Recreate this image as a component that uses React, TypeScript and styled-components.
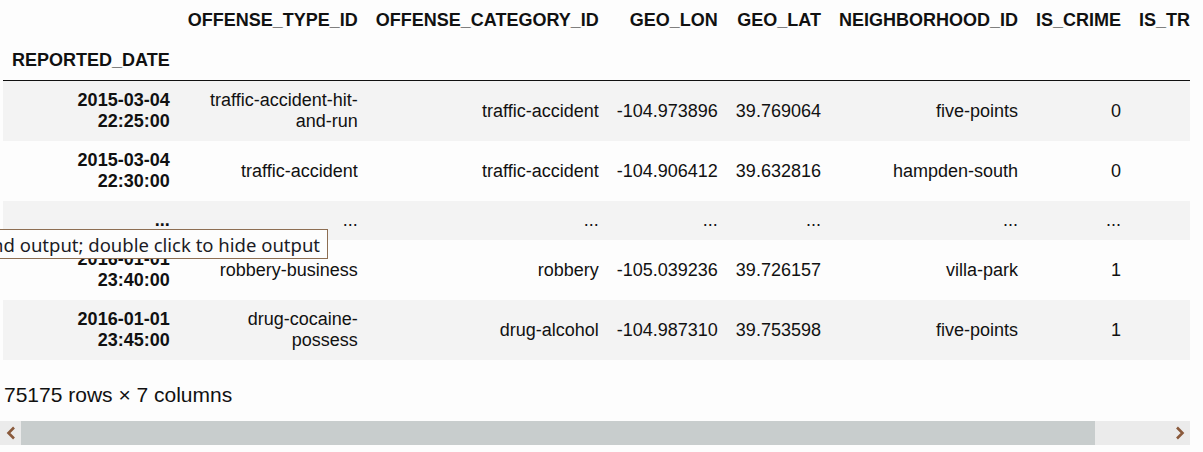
import React from "react";
import styled, { createGlobalStyle } from "styled-components";

const GlobalStyle = createGlobalStyle`
  html, body {
    margin: 0;
    padding: 0;
    background: #fdfdfd;
  }
  body {
    font-family: "Liberation Sans", Arial, sans-serif;
    color: #111;
  }
`;

type Column = { key: string; label: string; width: number };

const columns: Column[] = [
  { key: "type", label: "OFFENSE_TYPE_ID", width: 188 },
  { key: "category", label: "OFFENSE_CATEGORY_ID", width: 243 },
  { key: "lon", label: "GEO_LON", width: 119 },
  { key: "lat", label: "GEO_LAT", width: 103 },
  { key: "hood", label: "NEIGHBORHOOD_ID", width: 197 },
  { key: "crime", label: "IS_CRIME", width: 103 },
  { key: "traffic", label: "IS_TRAFFIC", width: 118 },
];

const INDEX_WIDTH = 176;

type Row = { index: string; values: string[] };

const rows: Row[] = [
  {
    index: "2015-03-04 22:25:00",
    values: ["traffic-accident-hit-and-run", "traffic-accident", "-104.973896", "39.769064", "five-points", "0", "1"],
  },
  {
    index: "2015-03-04 22:30:00",
    values: ["traffic-accident", "traffic-accident", "-104.906412", "39.632816", "hampden-south", "0", "1"],
  },
  {
    index: "...",
    values: ["...", "...", "...", "...", "...", "...", "..."],
  },
  {
    index: "2016-01-01 23:40:00",
    values: ["robbery-business", "robbery", "-105.039236", "39.726157", "villa-park", "1", "0"],
  },
  {
    index: "2016-01-01 23:45:00",
    values: ["drug-cocaine-possess", "drug-alcohol", "-104.987310", "39.753598", "five-points", "1", "0"],
  },
];

const Page = styled.div`
  position: relative;
  width: 1203px;
  height: 452px;
  overflow: hidden;
`;

const OutputArea = styled.div`
  width: 1190px;
  overflow: hidden;
`;

const DataTable = styled.table`
  border-collapse: collapse;
  border-spacing: 0;
  table-layout: fixed;
  margin-left: 3px;
  font-family: "Liberation Sans", Arial, sans-serif;
  font-size: 18px;
  line-height: normal;
  color: #111;
`;

const Col = styled.col<{ $w: number }>`
  width: ${(p) => p.$w}px;
`;

const Head = styled.thead`
  border-bottom: 1px solid #111;
`;

const HeadCell = styled.th`
  text-align: right;
  vertical-align: middle;
  padding: 9.5px 9px;
  font-weight: bold;
  white-space: nowrap;
`;

const BodyRow = styled.tr`
  &:nth-child(odd) {
    background: #f3f3f3;
  }
`;

const IndexCell = styled.th`
  text-align: right;
  vertical-align: middle;
  padding: 9px 9px;
  font-weight: bold;
`;

const Cell = styled.td`
  text-align: right;
  vertical-align: middle;
  padding: 9px 9px;
  font-weight: normal;
`;

const Caption = styled.p`
  margin: 23px 0 13.5px 4px;
  font-family: "Liberation Sans", Arial, sans-serif;
  font-size: 21px;
  line-height: normal;
  color: #111;
`;

const ScrollBar = styled.div`
  display: flex;
  width: 1190px;
  height: 24px;
`;

const ScrollButton = styled.div`
  flex: none;
  width: 21px;
  display: flex;
  align-items: center;
  justify-content: center;
  background: #ebebeb;
`;

const Thumb = styled.div<{ $w: number }>`
  flex: none;
  width: ${(p) => p.$w}px;
  background: #c8cdcd;
`;

const Track = styled.div`
  flex: 1;
  background: #ebebeb;
`;

const Tooltip = styled.div`
  position: absolute;
  top: 229px;
  right: 875px;
  height: 30px;
  box-sizing: border-box;
  display: flex;
  align-items: center;
  padding: 0 7px 0 8px;
  border: 1px solid #8d6e52;
  background: #fdfdfd;
  font-family: "Noto Sans", "Open Sans", sans-serif;
  font-size: 18.5px;
  color: #1b1b25;
  white-space: nowrap;
`;

const Chevron = ({ dir }: { dir: "left" | "right" }) => (
  <svg width="10" height="14" viewBox="0 0 10 14" aria-hidden="true">
    <polyline
      points={dir === "left" ? "8,1.5 2.5,7 8,12.5" : "2,1.5 7.5,7 2,12.5"}
      fill="none"
      stroke="#8a5a3c"
      strokeWidth="2.6"
      strokeLinejoin="miter"
    />
  </svg>
);

export default function App() {
  return (
    <>
      <GlobalStyle />
      <Page>
        <OutputArea>
          <DataTable>
            <colgroup>
              <Col $w={INDEX_WIDTH} />
              {columns.map((c) => (
                <Col key={c.key} $w={c.width} />
              ))}
            </colgroup>
            <Head>
              <tr>
                <HeadCell />
                {columns.map((c) => (
                  <HeadCell key={c.key}>{c.label}</HeadCell>
                ))}
              </tr>
              <tr>
                <HeadCell>REPORTED_DATE</HeadCell>
                {columns.map((c) => (
                  <HeadCell key={c.key} />
                ))}
              </tr>
            </Head>
            <tbody>
              {rows.map((r, i) => (
                <BodyRow key={i}>
                  <IndexCell>{r.index}</IndexCell>
                  {r.values.map((v, j) => (
                    <Cell key={j}>{v}</Cell>
                  ))}
                </BodyRow>
              ))}
            </tbody>
          </DataTable>
          <Caption>75175 rows × 7 columns</Caption>
        </OutputArea>
        <ScrollBar>
          <ScrollButton>
            <Chevron dir="left" />
          </ScrollButton>
          <Thumb $w={1074} />
          <Track />
          <ScrollButton>
            <Chevron dir="right" />
          </ScrollButton>
        </ScrollBar>
        <Tooltip>Click to expand output; double click to hide output</Tooltip>
      </Page>
    </>
  );
}
